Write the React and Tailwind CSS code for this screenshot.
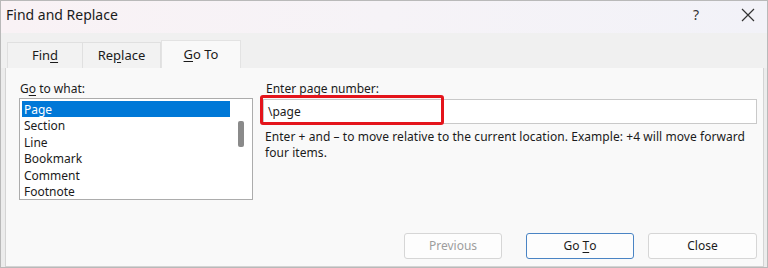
import React from 'react';

const font = { fontFamily: '"Noto Sans", "Open Sans", Arial, sans-serif' };

function Tab({ children, active }) {
  return active ? (
    <div className="h-[28px] w-[80px] flex items-center justify-center bg-[#f9f9f9] border-t border-l border-r border-[#e3e3e3] text-[13px] text-[#1b1b1b]">
      {children}
    </div>
  ) : (
    <div className="h-[26px] flex items-center justify-center bg-[#f2f2f2] border-t border-l border-[#e0e0e0] text-[13px] text-[#1b1b1b]">
      {children}
    </div>
  );
}

function Btn({ children, disabled, primary, w }) {
  return (
    <div
      className={`h-[26px] ${w} flex items-center justify-center rounded-[3px] bg-[#fdfdfd] text-[12px] ${
        primary ? 'border border-[#4a84c4]' : 'border border-[#d6d6d6]'
      } ${disabled ? 'text-[#9d9d9d]' : 'text-[#1b1b1b]'}`}
    >
      {children}
    </div>
  );
}

const items = ['Page', 'Section', 'Line', 'Bookmark', 'Comment', 'Footnote'];

export default function App() {
  return (
    <div style={font} className="w-[768px] h-[268px] flex flex-col bg-[#ececec] border border-[#b9b9b9] overflow-hidden">
      {/* title bar */}
      <div className="h-[32px] shrink-0 flex items-center justify-between pl-[5px] pr-[12px] bg-gradient-to-r from-[#f9f2f5] via-[#f6f3f7] to-[#f2f2f8]">
        <span className="text-[14px] text-[#1b1b1b] -mt-[6px]">Find and Replace</span>
        <div className="flex items-center gap-[42px] -mt-[5px]">
          <span className="text-[14px] text-[#333]">?</span>
          <svg width="14" height="14" viewBox="0 0 14 14" className="mt-[1px]">
            <path d="M1 1 L13 13 M13 1 L1 13" stroke="#333" strokeWidth="1.2" />
          </svg>
        </div>
      </div>

      {/* tabs */}
      <div className="h-[35px] shrink-0 flex items-end pl-[6px] bg-[#f0f0f0]">
        <div className="flex items-end border-r border-[#e0e0e0]">
          <div className="w-[75px]"><Tab>Fin<span className="underline underline-offset-2">d</span></Tab></div>
          <div className="w-[78px]"><Tab>Re<span className="underline underline-offset-2">p</span>lace</Tab></div>
        </div>
        <Tab active><span className="underline underline-offset-2">G</span>o To</Tab>
      </div>

      {/* panel */}
      <div className="flex-1 ml-[4px] mr-[3px] bg-[#f9f9f9] border-l border-r border-b border-[#d4d4d4] flex flex-col">
        <div className="flex pl-[13px] pt-[12px]">
          {/* left column */}
          <div className="w-[234px] flex flex-col">
            <div className="text-[12px] text-[#1b1b1b] h-[17px] leading-[17px] pl-[1px]">
              G<span className="underline underline-offset-2">o</span> to what:
            </div>
            <div className="mt-[1px] h-[102px] bg-white border border-[#acacac] flex">
              <div className="flex-1 pl-[2px] pt-[2px]">
                {items.map((it, i) => (
                  <div
                    key={it}
                    className={`h-[16.4px] leading-[18px] text-[12px] pl-[2px] ${
                      i === 0 ? 'bg-[#0078d7] text-white' : 'text-[#1b1b1b]'
                    }`}
                  >
                    {it}
                  </div>
                ))}
              </div>
              <div className="w-[22px] flex justify-center pt-[22px]">
                <div className="w-[6px] h-[26px] rounded-[2px] bg-[#8a8a8a]" />
              </div>
            </div>
          </div>

          {/* right column */}
          <div className="ml-[10px] w-[494px] flex flex-col">
            <div className="text-[12px] text-[#1b1b1b] h-[17px] leading-[17px] pl-[3px]">
              <span className="underline underline-offset-2">E</span>nter page number:
            </div>
            <div className="relative mt-[2px] h-[25px] bg-white border border-[#c9c9c9] flex items-center pl-[4px] text-[12px] text-[#1b1b1b]">
              \page
              <div className="absolute left-[-4px] top-[-5px] w-[184px] h-[30px] border-[3px] border-[#e4141b] rounded-[3px]" />
            </div>
            <div className="mt-[5px] pl-[2px] text-[12px] leading-[16px] text-[#1b1b1b] pr-[4px] tracking-[0.06px]">
              Enter + and – to move relative to the current location. Example: +4 will move forward four items.
            </div>
          </div>
        </div>

        <div className="mt-auto mb-[7px] flex justify-end pr-[6px]">
          <Btn disabled w="w-[98px]">Previous</Btn>
          <div className="w-[24px]" />
          <Btn primary w="w-[108px]">Go <span className="underline underline-offset-2 ml-[3px]">T</span>o</Btn>
          <div className="w-[14px]" />
          <Btn w="w-[109px]">Close</Btn>
        </div>
      </div>
    </div>
  );
}
